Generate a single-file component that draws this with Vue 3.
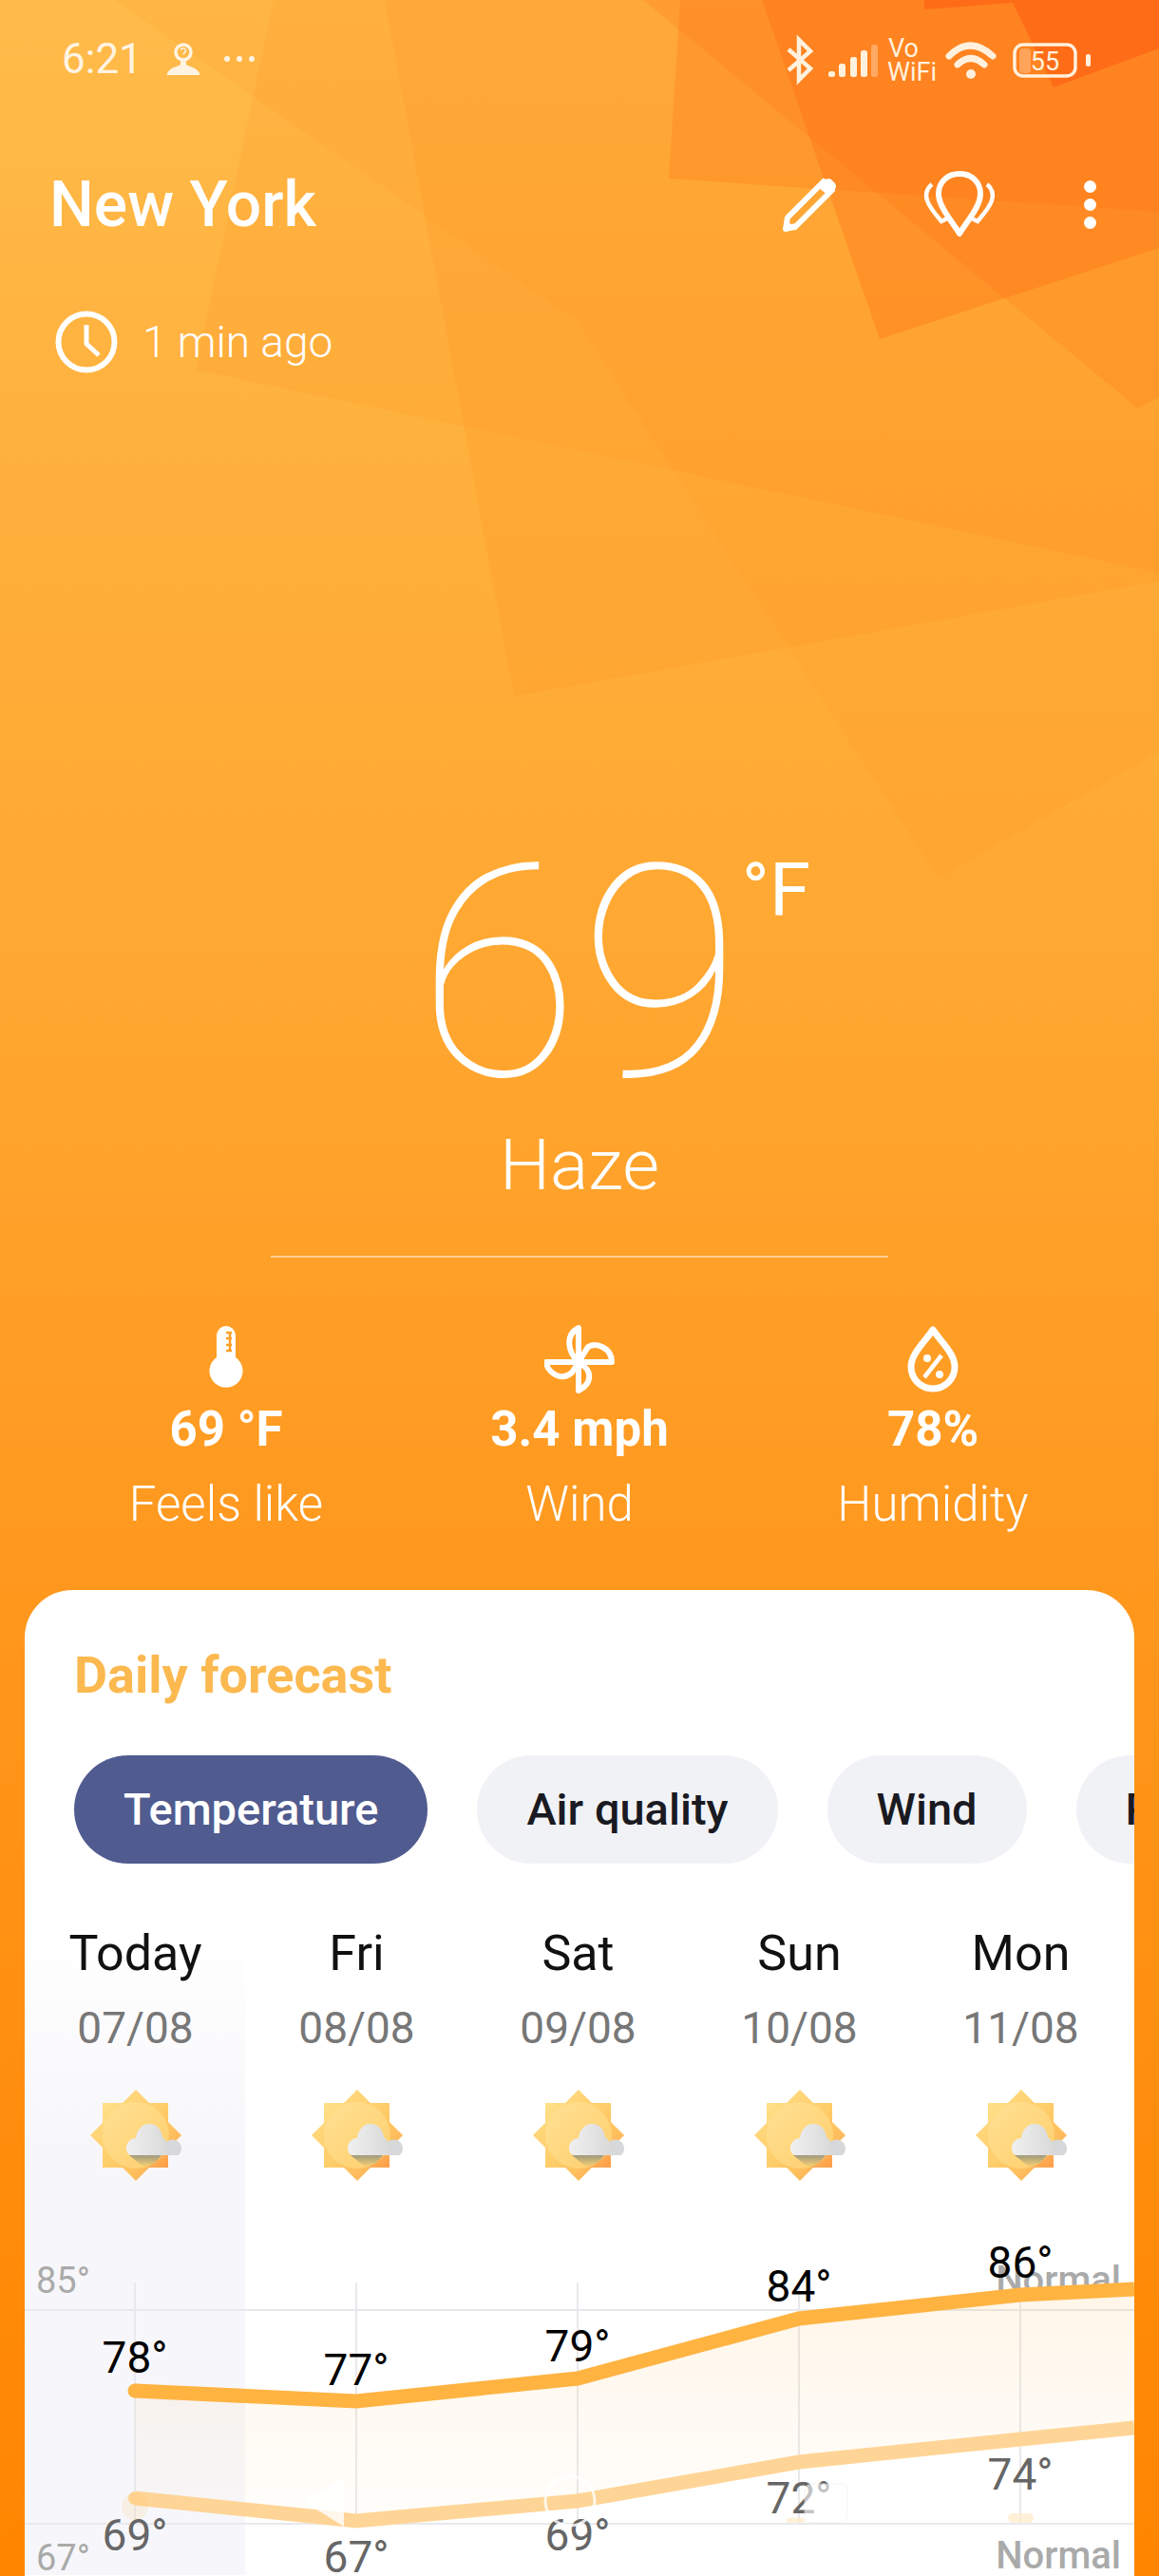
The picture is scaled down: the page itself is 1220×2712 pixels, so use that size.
<script setup>
const days = [
  { name: 'Today', date: '07/08' },
  { name: 'Fri', date: '08/08' },
  { name: 'Sat', date: '09/08' },
  { name: 'Sun', date: '10/08' },
  { name: 'Mon', date: '11/08' }
]

const stats = [
  { key: 'feels', value: '69 °F', label: 'Feels like' },
  { key: 'wind', value: '3.4 mph', label: 'Wind' },
  { key: 'humidity', value: '78%', label: 'Humidity' }
]

const tabs = ['Temperature', 'Air quality', 'Wind', 'Precipitation']

const bars = [
  { x: 872, y: 75, h: 6 },
  { x: 883, y: 67, h: 14 },
  { x: 895, y: 60, h: 21 },
  { x: 906, y: 53, h: 28 },
  { x: 917, y: 47, h: 34, o: 0.35 }
]

// chart points, same coordinates as the page
const high = [[142, 2518], [375, 2529], [608, 2505], [841, 2442], [1074, 2417], [1194, 2411]]
const low = [[142, 2631], [375, 2655], [608, 2634], [841, 2593], [1074, 2569], [1194, 2557]]
const toLine = (pts) => pts.map((p) => p.join(',')).join(' ')
const highLine = toLine(high)
const lowLine = toLine(low)
const areaLine = toLine([...high, ...[...low].reverse()])

const highLabels = [
  { x: 142, y: 2483, t: '78°' },
  { x: 375, y: 2496, t: '77°' },
  { x: 608, y: 2471, t: '79°' },
  { x: 841, y: 2408, t: '84°' },
  { x: 1074, y: 2383, t: '86°' }
]
const lowLabels = [
  { x: 142, y: 2670, t: '69°' },
  { x: 375, y: 2693, t: '67°' },
  { x: 608, y: 2670, t: '69°' },
  { x: 841, y: 2631, t: '72°' },
  { x: 1074, y: 2606, t: '74°' }
]
</script>

<template>
  <div class="page">
    <svg class="backdrop" viewBox="0 0 1220 2712" preserveAspectRatio="none">
      <polygon points="120,0 607,338 988,925 1220,791 1220,0" fill="#ff7a10" opacity="0.08" />
      <polygon points="288,0 206,389 1220,603 1220,0" fill="#ff7a10" opacity="0.09" />
      <polygon points="405,0 541,733 1220,612 1220,0" fill="#ff7a10" opacity="0.12" />
      <polygon points="677,0 1198,430 1220,418 1220,0" fill="#ff7414" opacity="0.22" />
      <polygon points="716,0 704,188 1220,223 1220,0" fill="#ff7014" opacity="0.26" />
      <polygon points="802,0 926,357 1220,261 1220,0" fill="#ff6a14" opacity="0.32" />
      <polygon points="973,0 973,10 1066,3 1109,92 1220,51 1220,0" fill="#ff5a10" opacity="0.55" />
    </svg>

    <div class="status">
      <div class="status-left">
        <span class="time">6:21</span>
        <svg class="person" width="34" height="34" viewBox="0 0 34 34">
          <circle cx="17" cy="10" r="8" fill="none" stroke="#fff4e2" stroke-width="3.500" />
          <path d="M14.500 8a2.500 2.500 0 1 1 3.500 2.500L17 12.500" fill="none" stroke="#fff4e2" stroke-width="1.500" />
          <path d="M14 18h6v5c3 2 11 3 14 9v2H0v-2c3-6 11-7 14-9z" fill="#fff4e2" />
        </svg>
        <svg class="more" width="34" height="8" viewBox="0 0 34 8">
          <circle cx="4" cy="4" r="3" fill="#fff4e2" />
          <circle cx="17" cy="4" r="3" fill="#fff4e2" />
          <circle cx="30" cy="4" r="3" fill="#fff4e2" />
        </svg>
      </div>
      <svg class="status-icons" width="330" height="60" viewBox="825 34 330 60">
        <path d="M830 52 853 72 841 84V42L853 54 830 74" fill="none" stroke="#fff1dd" stroke-width="4.500" />
        <rect v-for="b in bars" :key="b.x" :x="b.x" :y="b.y" width="7" :height="b.h" rx="2.500" fill="#fff1dd" :opacity="b.o || 1" />
        <text x="935" y="60" class="vo">Vo</text>
        <text x="934" y="85" class="vo">WiFi</text>
        <path d="M999 59Q1021 37 1045 59" fill="none" stroke="#fff1dd" stroke-width="7" stroke-linecap="round" />
        <path d="M1008 68Q1022 55 1036 68" fill="none" stroke="#fff1dd" stroke-width="7" stroke-linecap="round" />
        <circle cx="1022" cy="78" r="5" fill="#fff1dd" />
        <rect x="1073" y="51" width="12" height="26" rx="4" fill="#fff1dd" opacity="0.3" />
        <rect x="1068" y="47" width="64" height="33" rx="9" fill="none" stroke="#fff1dd" stroke-width="3.500" />
        <text x="1100" y="74" text-anchor="middle" class="batt">55</text>
        <rect x="1143" y="57" width="5" height="13" rx="2" fill="#fff1dd" />
      </svg>
    </div>

    <div class="top">
      <h1 class="city">New York</h1>
      <svg class="pencil" width="62" height="62" viewBox="0 0 62 62">
        <path d="M6 45 44 7 53 16 15 54 4 57Z" fill="none" stroke="#fff" stroke-width="6" stroke-linejoin="round" />
        <path d="M38 13 46 5Q49 3 52 5L56 9Q58 12 56 15L49 22Z" fill="#fff" />
        <path d="M3 46 16 58 3 59Z" fill="#fff" />
      </svg>
      <svg class="pins" width="78" height="70" viewBox="0 0 78 70">
        <path d="M38 66C31 54 16 38 16 24 16 11 26 3 38 3S60 11 60 24C60 38 45 54 38 66Z" fill="none" stroke="#fff" stroke-width="6" stroke-linejoin="round" />
        <path d="M9 14C3 19 2 25 4 31 6 38 13 46 19 53L25 50" fill="none" stroke="#fff" stroke-width="4.500" />
        <path d="M67 14C73 19 74 25 72 31 70 38 63 46 57 53L51 50" fill="none" stroke="#fff" stroke-width="4.500" />
      </svg>
      <div class="menu"><i></i><i></i><i></i></div>
    </div>

    <div class="updated">
      <svg width="66" height="66" viewBox="0 0 66 66">
        <circle cx="33" cy="33" r="29.500" fill="none" stroke="#fff" stroke-width="6" />
        <path d="M33 15V35L46 47" fill="none" stroke="#fff" stroke-width="5" />
      </svg>
      <span>1 min ago</span>
    </div>

    <div class="hero">
      <div class="temp">
        69
        <span class="unit">°F</span>
      </div>
      <div class="cond">Haze</div>
      <div class="rule"></div>
    </div>

    <div class="stats">
      <div v-for="s in stats" :key="s.key" class="stat">
        <svg v-if="s.key === 'feels'" width="74" height="72" viewBox="0 0 74 72">
          <path d="M27 11a10 10 0 0 1 20 0V34a17.500 17.500 0 1 1-20 0Z" fill="#fff" />
          <path d="M37 8h6M41 8v20M37 14h6M37 21h6M37 27h6" stroke="#ff9f28" stroke-width="2.500" fill="none" />
        </svg>
        <svg v-else-if="s.key === 'wind'" width="74" height="72" viewBox="0 0 74 72">
          <g fill="none" stroke="#fff" stroke-width="6" stroke-linejoin="round">
            <path d="M36 39C24 28 22 10 36 3Z" />
            <path d="M36 39H71C71 24 55 18 46 23Z" />
            <path d="M36 39V69C50 62 52 48 36 39Z" />
            <path d="M36 39H2C3 50 18 60 29 50Z" />
          </g>
        </svg>
        <svg v-else width="74" height="72" viewBox="0 0 74 72">
          <path d="M37 5C29 17 14 30 14 44A23 23 0 0 0 60 44C60 30 45 17 37 5Z" fill="none" stroke="#fff" stroke-width="7" stroke-linejoin="round" />
          <circle cx="31" cy="35" r="4" fill="#fff" />
          <circle cx="44" cy="52" r="4" fill="#fff" />
          <path d="M46 32 28 55" stroke="#fff" stroke-width="4.500" />
        </svg>
        <div class="stat-value">{{ s.value }}</div>
        <div class="stat-label">{{ s.label }}</div>
      </div>
    </div>

    <section class="card">
      <h2 class="card-title">Daily forecast</h2>
      <div class="tabs">
        <span v-for="(t, i) in tabs" :key="t" class="tab" :class="{ active: i === 0 }">{{ t }}</span>
      </div>

      <div class="forecast">
        <div class="today-shade"></div>
        <div class="days">
          <div v-for="d in days" :key="d.date" class="day">
            <div class="day-name">{{ d.name }}</div>
            <div class="day-date">{{ d.date }}</div>
            <svg class="sun" width="96" height="96" viewBox="0 0 96 96">
              <defs>
                <linearGradient id="rayA" x1="0" y1="0" x2="1" y2="1">
                  <stop offset="0" stop-color="#ffe08a" />
                  <stop offset="0.6" stop-color="#ffc964" />
                  <stop offset="1" stop-color="#ff9c48" />
                </linearGradient>
                <linearGradient id="disc" x1="0" y1="0" x2="1" y2="1">
                  <stop offset="0" stop-color="#ffe094" />
                  <stop offset="1" stop-color="#ffcf6c" />
                </linearGradient>
                <linearGradient id="puff" x1="0" y1="0" x2="1" y2="0">
                  <stop offset="0" stop-color="#f0f0f0" />
                  <stop offset="1" stop-color="#d9d9d9" />
                </linearGradient>
                <linearGradient id="shadow" x1="0" y1="0" x2="0" y2="1">
                  <stop offset="0" stop-color="#a09a7e" />
                  <stop offset="1" stop-color="#ffd470" />
                </linearGradient>
              </defs>
              <polygon points="48,0 96,48 48,96 0,48" fill="url(#rayA)" />
              <rect x="13" y="14" width="69" height="68" fill="url(#rayA)" />
              <circle cx="48" cy="48" r="35" fill="url(#disc)" />
              <path d="M41 69 75 69C70 76 64 80 57 82Z" fill="url(#shadow)" />
              <path d="M76 55h4a8 8 0 0 1 13 14H70Z" fill="#d6d8d9" />
              <path d="M38 62C38 55 43 51 48 51 49 42 55 36 62 36 70 36 75 42 76 50 80 52 82 58 82 69H44C40 69 38 66 38 62Z" fill="url(#puff)" />
            </svg>
          </div>
        </div>

        <svg class="chart" width="1168" height="372" viewBox="26 2340 1168 372">
          <defs>
            <linearGradient id="band" x1="0" y1="0" x2="0" y2="1">
              <stop offset="0" stop-color="#ffb341" stop-opacity="0.12" />
              <stop offset="1" stop-color="#ffb341" stop-opacity="0.02" />
            </linearGradient>
          </defs>
          <line x1="26" x2="1194" y1="2433" y2="2433" class="grid" />
          <line x1="26" x2="1194" y1="2658" y2="2658" class="grid" />
          <line v-for="d in highLabels" :key="d.x" :x1="d.x" :x2="d.x" y1="2404" y2="2658" class="grid" />
          <text x="38" y="2415" class="axis">85°</text>
          <text x="38" y="2707" class="axis">67°</text>
          <text x="1180" y="2415" text-anchor="end" class="normal">Normal</text>
          <text x="1180" y="2705" text-anchor="end" class="normal">Normal</text>
          <polygon :points="areaLine" fill="url(#band)" />
          <polyline :points="lowLine" class="low-line" />
          <polyline :points="highLine" class="high-line" />
          <circle cx="142" cy="2518" r="7.500" fill="#ffb341" />
          <circle cx="142" cy="2631" r="7" fill="#ffd597" />
          <text v-for="l in highLabels" :key="l.t" :x="l.x" :y="l.y + 16" text-anchor="middle" class="high-text">{{ l.t }}</text>
          <text v-for="l in lowLabels" :key="l.t + l.x" :x="l.x" :y="l.y + 16" text-anchor="middle" class="low-text">{{ l.t }}</text>
          <!-- ghost marks left over on the chart -->
          <circle cx="142" cy="2640" r="14" fill="#ffb341" opacity="0.12" />
          <polygon points="362,2610 319,2634 362,2661" fill="#fff" opacity="0.8" />
          <circle cx="600" cy="2634" r="26" fill="none" stroke="#fff" stroke-width="3" opacity="0.8" />
          <rect x="847" y="2616" width="45" height="41" rx="7" fill="#fff" opacity="0.6" stroke="#eee" />
          <rect x="1061" y="2647" width="27" height="10" rx="5" fill="#ffe9c8" opacity="0.7" />
          <rect x="828" y="2652" width="19" height="5" rx="2" fill="#ffe9c8" opacity="0.7" />
        </svg>
      </div>
    </section>
  </div>
</template>

<style scoped>
.page {
  position: relative;
  width: 1220px;
  height: 2712px;
  overflow: hidden;
  display: flex;
  flex-direction: column;
  font-family: Roboto, "Liberation Sans", sans-serif;
  color: #fff;
  background: linear-gradient(180deg, #ffbb4a 0, #ffb03c 500px, #ffa832 1000px, #ff981e 1650px, #ff8500 2712px);
}

.backdrop {
  position: absolute;
  left: 0;
  top: 0;
  width: 1220px;
  height: 2712px;
}

.status,
.top,
.updated,
.hero,
.stats,
.card {
  position: relative;
}

.status {
  height: 124px;
  display: flex;
  align-items: center;
  justify-content: space-between;
  padding: 0 68px 0 65px;
}

.status-left {
  display: flex;
  align-items: center;
  color: #fff4e2;
}

.time {
  font-size: 44px;
  width: 111px;
}

.person {
  margin-right: 25px;
}

.status-icons {
  margin-right: -3px;
  margin-top: 4px;
}

.vo {
  font-size: 27px;
  fill: #fff1dd;
}

.batt {
  font-size: 27px;
  fill: #fff1dd;
}

.top {
  height: 182px;
  display: flex;
  align-items: center;
  padding: 0 66px 0 52px;
}

.city {
  margin: 0;
  font-size: 66px;
  font-weight: 500;
  flex: 1;
}

.pencil {
  margin-right: 87px;
}

.pins {
  margin-right: 91px;
}

.menu {
  display: flex;
  flex-direction: column;
  gap: 6px;
}

.menu i {
  display: block;
  width: 13px;
  height: 13px;
  border-radius: 50%;
  background: #fff;
}

.updated {
  display: flex;
  align-items: center;
  gap: 26px;
  padding-left: 58px;
  height: 66px;
  margin-top: 21px;
  font-size: 46px;
  font-weight: 300;
}

.hero {
  display: flex;
  flex-direction: column;
  align-items: center;
  margin-top: 473px;
}

.temp {
  position: relative;
  font-size: 312px;
  font-weight: 250;
  line-height: 320px;
}

.unit {
  position: absolute;
  left: 100%;
  top: 30px;
  margin-left: 0;
  font-size: 78px;
  font-weight: 400;
  line-height: 84px;
}

.cond {
  margin-top: -5px;
  font-size: 75px;
  font-weight: 300;
  line-height: 90px;
}

.rule {
  width: 650px;
  height: 2px;
  margin-top: 51px;
  background: rgba(255, 255, 255, 0.5);
}

.stats {
  display: grid;
  grid-template-columns: 372px 372px 372px;
  margin: 71px 0 0 52px;
}

.stat {
  display: flex;
  flex-direction: column;
  align-items: center;
}

.stat-value {
  margin-top: 8px;
  font-size: 51px;
  font-weight: 700;
  line-height: 60px;
}

.stat-label {
  margin-top: 19px;
  font-size: 51px;
  font-weight: 300;
  line-height: 60px;
}

.card {
  flex: 1;
  margin: 60px 26px 0;
  border-radius: 50px 50px 0 0;
  background: #fff;
  color: #111;
  overflow: hidden;
  padding-top: 60px;
}

.card-title {
  margin: 0 0 0 52px;
  font-size: 54px;
  font-weight: 700;
  line-height: 60px;
  color: #fbb950;
}

.tabs {
  display: flex;
  gap: 52px;
  margin-top: 54px;
  padding-left: 52px;
}

.tab {
  flex: none;
  height: 114px;
  padding: 0 52px;
  border-radius: 57px;
  background: #f1f2f6;
  color: #1a1a22;
  font-size: 47px;
  font-weight: 500;
  line-height: 114px;
}

.tab.active {
  background: #505b8f;
  color: #fff;
}

.forecast {
  position: relative;
  margin-top: 65px;
}

.today-shade {
  position: absolute;
  left: 0;
  top: 10px;
  bottom: 0;
  width: 232px;
  background: linear-gradient(180deg, #fff 0, #f7f7fb 220px);
}

.days {
  position: relative;
  display: grid;
  grid-template-columns: repeat(5, 233px);
}

.day {
  display: flex;
  flex-direction: column;
  align-items: center;
}

.day-name {
  font-size: 52px;
  font-weight: 400;
  line-height: 60px;
}

.day-date {
  margin-top: 23px;
  font-size: 46px;
  line-height: 50px;
  color: #777;
}

.sun {
  margin-top: 40px;
}

.chart {
  position: relative;
  display: block;
  margin-top: 43px;
}

.grid {
  stroke: #e9e9ed;
  stroke-width: 2;
}

.axis {
  font-size: 38px;
  fill: #aaa;
}

.normal {
  font-size: 40px;
  font-weight: 500;
  fill: #aaa;
}

.high-line,
.low-line {
  fill: none;
  stroke-width: 15;
  stroke-linejoin: miter;
}

.high-line {
  stroke: #ffb341;
}

.low-line {
  stroke: #ffd597;
}

.high-text {
  font-size: 46px;
  font-weight: 400;
  fill: #000;
}

.low-text {
  font-size: 46px;
  font-weight: 400;
  fill: #666;
}
</style>
